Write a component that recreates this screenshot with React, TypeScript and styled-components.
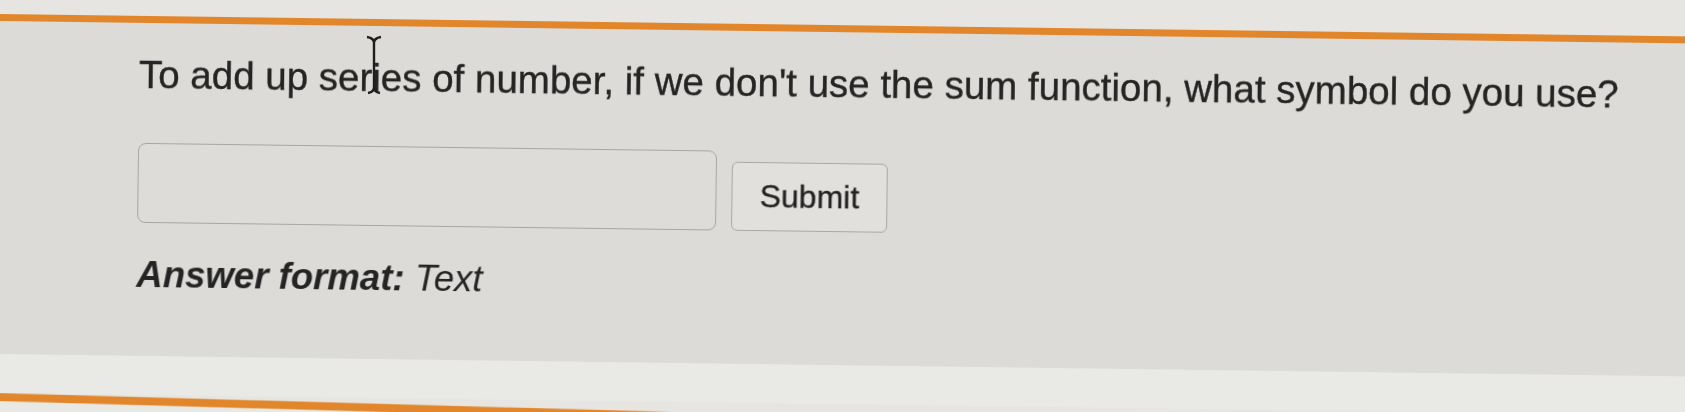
import React, { FC } from 'react'
import styled, { createGlobalStyle } from 'styled-components'

const GlobalStyle = createGlobalStyle`
    html, body {
        margin: 0;
        padding: 0;
        background: #e6e5e2;
        overflow: hidden;
    }
`;

const Screen = styled.div`
    position: relative;
    width: 1685px;
    height: 412px;
    overflow: hidden;
    background: #e6e5e2;
    font-family: "Liberation Sans", Arial, sans-serif;
    color: #242424;
`;

// the photo is taken at a small angle, so the whole sheet is tilted a bit
const Sheet = styled.div`
    width: 1740px;
    padding-top: 14px;
    transform: rotate(0.76deg);
    transform-origin: 0 0;
    filter: blur(0.35px);
`;

const QuestionCard = styled.section`
    border-top: 7px solid #e2862b;
    background: #dcdbd8;
    padding: 30px 0 60px 140px;
`;

const Question = styled.h2`
    margin: 0;
    font-size: 38.5px;
    line-height: 44px;
    font-weight: normal;
    -webkit-text-stroke: 0.35px #242424;
`;

const AnswerRow = styled.form`
    display: flex;
    align-items: flex-end;
    gap: 15px;
    margin-top: 46px;
`;

const AnswerInput = styled.input`
    box-sizing: border-box;
    width: 579px;
    height: 80px;
    border: 1.5px solid #a7a6a3;
    border-radius: 8px;
    background: #dddcd9;
    outline: none;
`;

const SubmitButton = styled.button`
    box-sizing: border-box;
    width: 156px;
    height: 69px;
    border: 1.5px solid #a9a8a5;
    border-radius: 6px;
    background: #e1e0dd;
    color: #222;
    font-family: "Liberation Sans", Arial, sans-serif;
    font-size: 32px;
    padding: 0;
    -webkit-text-stroke: 0.3px #222;
`;

const FormatNote = styled.p`
    margin: 31px 0 0;
    font-size: 36.6px;
    line-height: 42px;
    font-style: italic;

    strong {
        font-weight: bold;
    }
`;

const Gap = styled.div`
    height: 39px;
    background: #e9e9e6;
`;

const NextCard = styled.section`
    height: 80px;
    border-top: 8px solid #e2862b;
    background: #e8e8e5;
    transform: rotate(0.85deg);
    transform-origin: 0 0;
`;

const Cursor = styled.svg`
    position: absolute;
    left: 365px;
    top: 35px;
`;

const QuizQuestion: FC<{ text: string; format: string }> = ({ text, format }) => (
    <QuestionCard>
        <Question>{text}</Question>
        <AnswerRow onSubmit={e => e.preventDefault()}>
            <AnswerInput type="text" />
            <SubmitButton type="submit">Submit</SubmitButton>
        </AnswerRow>
        <FormatNote>
            <strong>Answer format:</strong> {format}
        </FormatNote>
    </QuestionCard>
)

const App: FC = () => {
    return (
        <Screen>
            <GlobalStyle />
            <Sheet>
                <QuizQuestion
                    text="To add up series of number, if we don't use the sum function, what symbol do you use?"
                    format="Text"
                />
                <Gap />
                <NextCard />
            </Sheet>
            <Cursor width="18" height="60" viewBox="0 0 18 60">
                <path d="M2 2 Q9 3 9 8 Q9 3 16 2 M9 8 V52 Q9 57 3 58 M9 52 Q9 57 15 58" fill="none" stroke="#1e1e1e" strokeWidth="2.4" />
            </Cursor>
        </Screen>
    )
}

export default App
